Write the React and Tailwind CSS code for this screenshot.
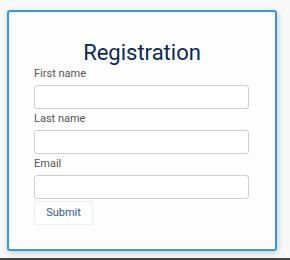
export default function App() {
  const fields = ["First name", "Last name", "Email"];
  return (
    <div className="w-[290px] h-[260px] bg-[#444] font-['Roboto',sans-serif]">
      <div className="h-[258px] bg-[#f8f8f8] pt-[10px] pl-[7px]">
        <div className="w-[270px] h-[241px] bg-[#fdfdfd] border-2 border-[#2e9cd6] rounded-[3px] shadow-[1px_2px_6px_rgba(0,0,0,0.18)] px-[25px] pt-[28px]">
          <h1 className="text-center text-[22px] leading-[26px] text-[#0b2a52]">Registration</h1>
          {fields.map((f) => (
            <div key={f}>
              <label className="block text-[11px] leading-[16px] text-[#555] mb-[3px]">{f}</label>
              <input className="block w-[215px] h-[24px] border border-[#cfcfcf] rounded-[3px] bg-white mb-[2px] outline-none" />
            </div>
          ))}
          <button className="block w-[59px] h-[24px] border border-[#eeeeee] rounded-[2px] bg-white text-[11px] leading-[22px] text-[#1f5c98]">Submit</button>
        </div>
      </div>
    </div>
  );
}
